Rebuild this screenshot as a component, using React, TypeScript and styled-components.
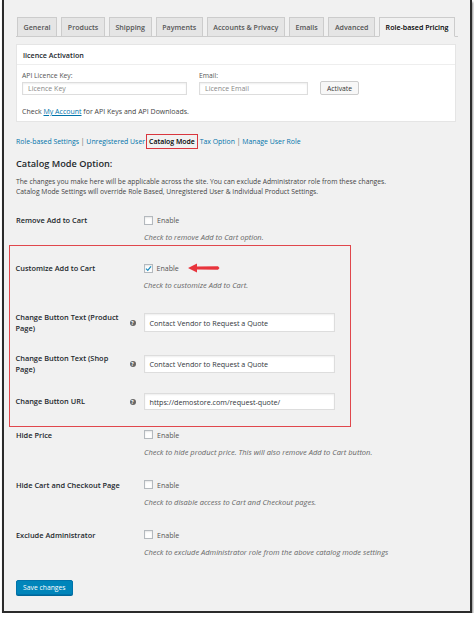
import React from 'react';
import styled, { createGlobalStyle } from 'styled-components';

const GlobalStyle = createGlobalStyle`
  html, body {
    margin: 0;
    padding: 0;
    background: #ffffff;
  }
  body {
    font-family: "Open Sans", "Noto Sans", Arial, sans-serif;
    font-size: 7px;
    color: #444;
  }
`;

const Frame = styled.div`
  margin-left: 2px;
  width: 470px;
  box-sizing: border-box;
  background: #f1f1f1;
  border: 2px solid #2b2b2b;
  border-top: none;
  box-shadow: 1px 2px 2px rgba(0, 0, 0, 0.45);
  padding: 16px 12px 16px 12px;
`;

const TabBar = styled.div`
  display: flex;
  gap: 4px;
  padding-left: 1px;
  border-bottom: 1px solid #ccc;
  height: 20px;
`;

const Tab = styled.div<{ $active?: boolean }>`
  display: flex;
  align-items: center;
  padding: 0 5.6px;
  white-space: nowrap;
  font-size: 7.1px;
  font-weight: 600;
  color: ${(p) => (p.$active ? '#000' : '#555')};
  background: ${(p) => (p.$active ? '#f1f1f1' : '#e5e5e5')};
  border: 1px solid #ccc;
  border-bottom: ${(p) => (p.$active ? '1px solid #f1f1f1' : 'none')};
  height: ${(p) => (p.$active ? '20px' : '19px')};
  box-sizing: border-box;
  margin-top: 1px;
`;

const Panel = styled.div`
  margin-top: 7px;
  background: #fff;
  border: 1px solid #e5e5e5;
  width: 440px;
  box-sizing: border-box;
`;

const PanelHeader = styled.div`
  height: 19px;
  display: flex;
  align-items: center;
  padding-left: 6px;
  font-weight: 600;
  font-size: 7.2px;
  color: #23282d;
  border-bottom: 1px solid #eee;
`;

const PanelBody = styled.div`
  padding: 6px 5px 4px;
`;

const FieldRow = styled.div`
  display: flex;
  align-items: flex-end;
  gap: 12px;
`;

const Field = styled.div<{ $w: number }>`
  display: flex;
  flex-direction: column;
  gap: 1px;
  width: ${(p) => p.$w}px;
`;

const SmallLabel = styled.span`
  color: #555;
  font-size: 6.8px;
  line-height: 10px;
`;

const TextInput = styled.div<{ $h?: number; $placeholder?: boolean }>`
  height: ${(p) => p.$h ?? 13}px;
  box-sizing: border-box;
  background: #fff;
  border: 1px solid #ddd;
  box-shadow: inset 0 1px 2px rgba(0, 0, 0, 0.07);
  display: flex;
  align-items: center;
  padding-left: 5px;
  font-size: ${(p) => (p.$placeholder ? 7 : 7.2)}px;
  color: ${(p) => (p.$placeholder ? '#888' : '#32373c')};
  white-space: nowrap;
`;

const GreyButton = styled.div`
  height: 14px;
  box-sizing: border-box;
  padding: 0 6px;
  display: flex;
  align-items: center;
  background: #f7f7f7;
  border: 1px solid #ccc;
  border-radius: 2px;
  color: #333;
  font-size: 6.8px;
`;

const Note = styled.p`
  margin: 12px 0 0;
  font-size: 7px;
  line-height: 10px;
  color: #444;
`;

const Link = styled.a`
  color: #0073aa;
  text-decoration: underline;
`;

const SubNav = styled.div`
  margin-top: 14px;
  display: flex;
  align-items: center;
  height: 10px;
  font-size: 6.9px;
  color: #666;
  white-space: pre;
`;

const SubLink = styled.span`
  color: #0073aa;
`;

const CurrentSub = styled.span`
  font-weight: 600;
  color: #000;
  border: 1.5px solid #d9363e;
  padding: 2px 2px;
  margin: 0 2px 0 1px;
`;

const Heading = styled.h2`
  margin: 11px 0 0;
  font-size: 9.2px;
  line-height: 13px;
  font-weight: 600;
  color: #23282d;
`;

const Intro = styled.p`
  margin: 7px 0 0;
  font-size: 6.75px;
  line-height: 9.5px;
  color: #444;
  white-space: nowrap;
`;

const Rows = styled.div`
  margin-top: 1px;
`;

const Row = styled.div<{ $pad: string }>`
  display: grid;
  grid-template-columns: 113px 15px 1fr;
  align-items: start;
  padding: ${(p) => p.$pad};
`;

const Label = styled.div`
  font-size: 7.4px;
  line-height: 10.5px;
  font-weight: 600;
  color: #23282d;
  align-self: center;
`;

const TopLabel = styled(Label)`
  align-self: start;
`;

const Help = styled.span`
  align-self: center;
  margin-left: 1px;
  width: 6px;
  height: 6px;
  border-radius: 50%;
  background: #666;
  color: #fff;
  font-size: 5px;
  line-height: 6px;
  text-align: center;
  font-weight: 700;
`;

const Cell = styled.div`
  grid-column: 3;
  display: flex;
  flex-direction: column;
`;

const CheckLine = styled.div`
  display: flex;
  align-items: center;
  height: 10px;
  gap: 4px;
  font-size: 7.1px;
  color: #555;
`;

const Box = styled.span`
  width: 9px;
  height: 9px;
  box-sizing: border-box;
  border: 1px solid #b4b9be;
  background: #fff;
  box-shadow: inset 0 1px 2px rgba(0, 0, 0, 0.1);
  display: flex;
  align-items: center;
  justify-content: center;
`;

const Desc = styled.div`
  margin-top: 7px;
  font-size: 7.5px;
  line-height: 10px;
  font-style: italic;
  color: #666;
  white-space: nowrap;
`;

const Highlight = styled.div`
  margin: -2.5px 0 -15px -7px;
  width: 342px;
  box-sizing: border-box;
  border: 1.5px solid #e0474c;
  padding-left: 5.5px;
`;

const InputWrap = styled.div`
  grid-column: 3;
  width: 191px;
  align-self: center;
`;

const SaveButton = styled.button`
  margin-top: 18px;
  height: 15px;
  padding: 0 6px;
  background: #0085ba;
  border: 1px solid #0073aa;
  border-radius: 2px;
  box-shadow: 0 1px 0 #006799;
  color: #fff;
  font-family: inherit;
  font-size: 6.8px;
  display: flex;
  align-items: center;
`;

const Arrow = () => (
  <svg width="32" height="10" viewBox="0 0 32 10" style={{ marginLeft: 5 }}>
    <polygon
      points="0,5 9,0.5 9,3.6 30,3.2 31.5,5 30,6.8 9,6.4 9,9.5"
      fill="#e8343c"
    />
  </svg>
);

const CheckBox = ({ checked }: { checked?: boolean }) => (
  <Box>
    {checked && (
      <svg width="7" height="7" viewBox="0 0 7 7">
        <path d="M1 3.6 L2.8 5.4 L6 1.4" stroke="#1e8cbe" strokeWidth="1.3" fill="none" />
      </svg>
    )}
  </Box>
);

interface CheckRowProps {
  label: string;
  desc: string;
  checked?: boolean;
  pad?: string;
  arrow?: boolean;
}

const CheckRow = ({ label, desc, checked, pad = '18px 0 5px', arrow }: CheckRowProps) => (
  <Row $pad={pad}>
    <TopLabel>{label}</TopLabel>
    <Cell>
      <CheckLine>
        <CheckBox checked={checked} />
        Enable
        {arrow && <Arrow />}
      </CheckLine>
      <Desc>{desc}</Desc>
    </Cell>
  </Row>
);

const InputRow = ({ label, value, pad, h }: { label: string; value: string; pad: string; h: number }) => (
  <Row $pad={pad}>
    <Label>{label}</Label>
    <Help>?</Help>
    <InputWrap>
      <TextInput $h={h}>{value}</TextInput>
    </InputWrap>
  </Row>
);

const tabs = ['General', 'Products', 'Shipping', 'Payments', 'Accounts & Privacy', 'Emails', 'Advanced', 'Role-based Pricing'];

export default function App() {
  return (
    <>
      <GlobalStyle />
      <Frame>
        <TabBar>
          {tabs.map((t) => (
            <Tab key={t} $active={t === 'Role-based Pricing'}>
              {t}
            </Tab>
          ))}
        </TabBar>

        <Panel>
          <PanelHeader>licence Activation</PanelHeader>
          <PanelBody>
            <FieldRow>
              <Field $w={165}>
                <SmallLabel>API Licence Key:</SmallLabel>
                <TextInput $placeholder>Licence Key</TextInput>
              </Field>
              <Field $w={109}>
                <SmallLabel>Email:</SmallLabel>
                <TextInput $placeholder>Licence Email</TextInput>
              </Field>
              <GreyButton>Activate</GreyButton>
            </FieldRow>
            <Note>
              Check <Link>My Account</Link> for API Keys and API Downloads.
            </Note>
          </PanelBody>
        </Panel>

        <SubNav>
          <SubLink>Role-based Settings</SubLink> | <SubLink>Unregistered User</SubLink>
          <CurrentSub>Catalog Mode</CurrentSub>
          <SubLink>Tax Option</SubLink> | <SubLink>Manage User Role</SubLink>
        </SubNav>

        <Heading>Catalog Mode Option:</Heading>
        <Intro>
          The changes you make here will be applicable across the site. You can exclude Administrator role from these changes.
          <br />
          Catalog Mode Settings will override Role Based, Unregistered User &amp; Individual Product Settings.
        </Intro>

        <Rows>
          <CheckRow label="Remove Add to Cart" desc="Check to remove Add to Cart option." />
          <Highlight>
            <CheckRow
              label="Customize Add to Cart"
              desc="Check to customize Add to Cart."
              checked
              arrow
              pad="17.5px 0 5px"
            />
            <InputRow label="Change Button Text (Product Page)" value="Contact Vendor to Request a Quote" pad="17px 0 10px" h={19} />
            <InputRow label="Change Button Text (Shop Page)" value="Contact Vendor to Request a Quote" pad="10px 0 9px" h={18} />
            <InputRow label="Change Button URL" value="https://demostore.com/request-quote/" pad="10px 0 15.5px" h={17} />
          </Highlight>
          <CheckRow
            label="Hide Price"
            desc="Check to hide product price. This will also remove Add to Cart button."
          />
          <CheckRow label="Hide Cart and Checkout Page" desc="Check to disable access to Cart and Checkout pages." />
          <CheckRow
            label="Exclude Administrator"
            desc="Check to exclude Administrator role from the above catalog mode settings"
          />
        </Rows>

        <SaveButton>Save changes</SaveButton>
      </Frame>
    </>
  );
}
